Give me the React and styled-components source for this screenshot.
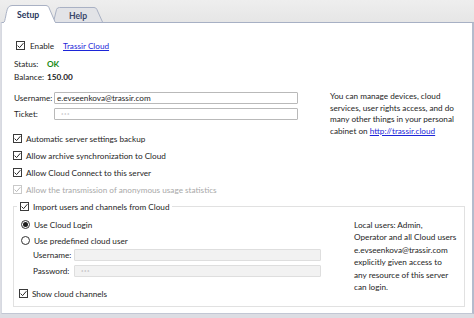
import React from "react";
import styled, { createGlobalStyle } from "styled-components";

const Global = createGlobalStyle`
  html, body { margin: 0; padding: 0; }
  body {
    background: #dcdde3;
    font-family: Lato, "Open Sans", sans-serif;
    font-size: 8.2px;
    color: #1e1e1e;
  }
`;

const Window = styled.div`
  width: 474px;
  height: 318px;
  display: flex;
  flex-direction: column;
  background: linear-gradient(#eeeeee, #e6e6e6 22px, #dcdde3 22px);
  overflow: hidden;
`;

const TabStrip = styled.div`
  height: 22px;
  flex: none;
  display: flex;
  align-items: flex-end;
  padding-left: 3px;
  position: relative;
  z-index: 2;
`;

const TabShape = styled.svg`
  position: absolute;
  left: 0;
  top: 0;
  width: 100%;
  height: 100%;
  overflow: visible;
`;

const Tab = styled.div`
  position: relative;
  width: ${(p) => p.$w}px;
  height: ${(p) => p.$h}px;
  margin-left: ${(p) => p.$ml || 0}px;
  margin-bottom: ${(p) => (p.$active ? -1 : 0)}px;
  display: flex;
  align-items: center;
  justify-content: ${(p) => (p.$active ? "flex-start" : "center")};
  padding-left: ${(p) => (p.$active ? 14 : 0)}px;
  padding-top: ${(p) => (p.$active ? 1 : 2)}px;
  box-sizing: border-box;
  font-size: 8.6px;
  font-weight: 700;
  color: ${(p) => (p.$active ? "#27365c" : "#38466a")};
  z-index: ${(p) => (p.$active ? 2 : 1)};
  order: ${(p) => (p.$active ? 0 : 1)};
  & > span {
    position: relative;
  }
`;

const Panel = styled.div`
  margin-left: 1px;
  width: 470px;
  height: 290px;
  flex: none;
  background: #fff;
  border: 1px solid #a7b0c4;
  border-left-color: #d6d9e1;
  border-bottom-color: #c2c7d4;
  border-right: 2px solid #b4bccd;
  display: flex;
  flex-direction: column;
`;

const Row = styled.div`
  display: flex;
  align-items: center;
  height: 13px;
  flex: none;
  margin-top: ${(p) => p.$mt || 0}px;
  margin-left: ${(p) => p.$ml || 0}px;
  padding-left: ${(p) => p.$pl || 0}px;
  white-space: nowrap;
`;

const Label = styled.span`
  width: ${(p) => (p.$w ? `${p.$w}px` : "auto")};
  flex: none;
  color: ${(p) => (p.$disabled ? "#a9a9a9" : "#1e1e1e")};
`;

const Value = styled.span`
  font-weight: 700;
  color: ${(p) => p.$color || "#1e1e1e"};
`;

const Link = styled.a`
  color: #1c25d8;
  text-decoration: underline;
  cursor: pointer;
`;

const Top = styled.div`
  display: flex;
  align-items: flex-start;
  height: 28px;
  flex: none;
  margin-top: 9px;
  padding-left: 12px;
`;

const FormCol = styled.div`
  display: flex;
  flex-direction: column;
  gap: 4px;
  width: 316px;
  flex: none;
`;

const Field = styled.div`
  display: flex;
  align-items: center;
  height: 12px;
`;

const Input = styled.div`
  box-sizing: border-box;
  height: 12px;
  width: ${(p) => p.$w}px;
  border: 1px solid ${(p) => (p.$disabled ? "#dedede" : "#b9b9b9")};
  border-radius: 1px;
  background: ${(p) => (p.$disabled ? "#f2f2f2" : "#fff")};
  display: flex;
  align-items: center;
  padding-left: ${(p) => (p.$masked ? 6 : 2)}px;
  font-size: ${(p) => (p.$masked ? "6px" : "8.2px")};
  color: ${(p) => (p.$masked ? "#a0a0a0" : "#1e1e1e")};
  letter-spacing: ${(p) => (p.$masked ? "0.4px" : "0")};
  white-space: nowrap;
`;

const Note = styled.p`
  margin: 0;
  margin-left: ${(p) => p.$ml || 0}px;
  margin-top: ${(p) => p.$mt || 0}px;
  line-height: ${(p) => p.$lh}px;
  white-space: nowrap;
  color: #1e1e1e;
  flex: none;
`;

const Checks = styled.div`
  display: flex;
  flex-direction: column;
  gap: 4px;
  flex: none;
  margin-top: ${(p) => p.$mt || 0}px;
  padding-left: ${(p) => p.$pl || 0}px;
`;

const BoxWrap = styled.span`
  width: 9px;
  height: 9px;
  box-sizing: border-box;
  border: 1px solid ${(p) => (p.$disabled ? "#c9c9c9" : "#3a3a3a")};
  background: #fff;
  flex: none;
  display: flex;
  align-items: center;
  justify-content: center;
  margin-right: ${(p) => p.$gap ?? 4}px;
`;

const RadioWrap = styled.span`
  width: 9px;
  height: 9px;
  box-sizing: border-box;
  border-radius: 50%;
  border: 1px solid #333;
  background: #fff;
  flex: none;
  display: flex;
  align-items: center;
  justify-content: center;
  margin-right: 4px;
  &::after {
    content: "";
    width: 5px;
    height: 5px;
    border-radius: 50%;
    background: ${(p) => (p.$on ? "#1e1e1e" : "transparent")};
  }
`;

const CheckBox = ({ disabled, gap }) => (
  <BoxWrap $disabled={disabled} $gap={gap}>
    <svg width="7" height="7" viewBox="0 0 7 7">
      <path
        d="M0.6 3.6 L2.6 5.6 L6.4 1.2"
        fill="none"
        stroke={disabled ? "#b9b9b9" : "#2a2a2a"}
        strokeWidth="1"
      />
    </svg>
  </BoxWrap>
);

const Group = styled.fieldset`
  margin: 4px 0 0 11px;
  width: 452px;
  height: 107px;
  box-sizing: border-box;
  border: 1px solid #e1e1e1;
  padding: 0;
  display: flex;
  flex: none;
  min-width: 0;
`;

const Legend = styled.legend`
  padding: 0 3px;
  margin-left: 3px;
  height: 13px;
  display: flex;
  align-items: center;
  white-space: nowrap;
`;

const GroupCol = styled.div`
  display: flex;
  flex-direction: column;
  padding-left: 7px;
  padding-top: 5px;
  width: 340px;
  flex: none;
  box-sizing: border-box;
`;

const SubFields = styled.div`
  display: flex;
  flex-direction: column;
  gap: 4px;
  padding-left: 12px;
  margin-top: 2px;
`;

export default function App() {
  return (
    <>
      <Global />
      <Window>
        <TabStrip>
          <Tab $w={50} $h={15} $ml={-3}>
            <TabShape viewBox="0 0 50 15" preserveAspectRatio="none">
              <path
                d="M0.5 15 L3.5 2.5 Q4.2 0.5 6.5 0.5 L41 0.5 Q43 0.5 43.8 2.3 L49.5 15"
                fill="#e2e3e7"
                stroke="#a9b1c4"
              />
            </TabShape>
            <span>Help</span>
          </Tab>
          <Tab $w={53} $h={18} $active>
            <TabShape viewBox="0 0 53 18" preserveAspectRatio="none">
              <path
                d="M0.5 18 C2.5 16.5 3 6 5 2.8 Q6.4 0.5 9 0.5 L43 0.5 Q45 0.5 45.8 2.3 L52.5 18"
                fill="#fff"
                stroke="#a9b1c4"
              />
              <rect x="1" y="17" width="51" height="2" fill="#fff" />
            </TabShape>
            <span>Setup</span>
          </Tab>
        </TabStrip>
        <Panel>
          <Row $mt={16} $pl={14}>
            <CheckBox gap={5} />
            <Label $w={33}>Enable</Label>
            <Link>Trassir Cloud</Link>
          </Row>
          <Row $mt={5} $pl={12}>
            <Label $w={33}>Status:</Label>
            <Value $color="#178a17">OK</Value>
          </Row>
          <Row $pl={12}>
            <Label $w={33}>Balance:</Label>
            <Value>150.00</Value>
          </Row>
          <Top>
            <FormCol>
              <Field>
                <Label $w={40}>Username:</Label>
                <Input $w={244}>e.evseenkova@trassir.com</Input>
              </Field>
              <Field>
                <Label $w={40}>Ticket:</Label>
                <Input $w={244} $masked>
                  ***
                </Input>
              </Field>
            </FormCol>
            <Note $mt={-1} $lh={11.6}>
              You can manage devices, cloud
              <br />
              services, user rights access, and do
              <br />
              many other things in your personal
              <br />
              cabinet on <Link>http://trassir.cloud</Link>
            </Note>
          </Top>
          <Checks $mt={12} $pl={11}>
            <Row>
              <CheckBox />
              <Label>Automatic server settings backup</Label>
            </Row>
            <Row>
              <CheckBox />
              <Label>Allow archive synchronization to Cloud</Label>
            </Row>
            <Row>
              <CheckBox />
              <Label>Allow Cloud Connect to this server</Label>
            </Row>
            <Row>
              <CheckBox disabled />
              <Label $disabled>
                Allow the transmission of anonymous usage statistics
              </Label>
            </Row>
          </Checks>
          <Group>
            <Legend>
              <CheckBox />
              <Label>Import users and channels from Cloud</Label>
            </Legend>
            <GroupCol>
              <Row>
                <RadioWrap $on />
                <Label>Use Cloud Login</Label>
              </Row>
              <Row $mt={3}>
                <RadioWrap />
                <Label>Use predefined cloud user</Label>
              </Row>
              <SubFields>
                <Field>
                  <Label $w={41}>Username:</Label>
                  <Input $w={247} $disabled />
                </Field>
                <Field>
                  <Label $w={41}>Password:</Label>
                  <Input $w={247} $disabled $masked>
                    ***
                  </Input>
                </Field>
              </SubFields>
              <Row $mt={10} $ml={-2}>
                <CheckBox />
                <Label>Show cloud channels</Label>
              </Row>
            </GroupCol>
            <Note $mt={6} $lh={12.4}>
              Local users: Admin,
              <br />
              Operator and all Cloud users
              <br />
              e.evseenkova@trassir.com
              <br />
              explicitly given access to
              <br />
              any resource of this server
              <br />
              can login.
            </Note>
          </Group>
        </Panel>
      </Window>
    </>
  );
}
